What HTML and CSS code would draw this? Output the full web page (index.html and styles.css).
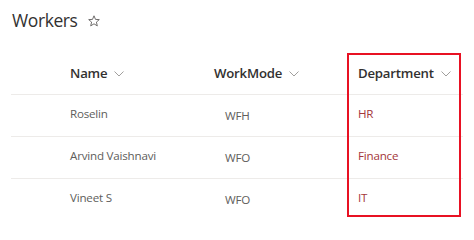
FILE: index.html
```html
<!DOCTYPE html>
<html>
<head>
<meta charset="utf-8">
<link rel="stylesheet" href="styles.css">
</head>
<body>
<div class="page">
  <div class="title-row">
    <h1 class="title">Workers</h1>
    <svg class="star" viewBox="0 0 12 12" width="12" height="12"><polygon points="6,0.8 7.5,4.4 11.3,4.6 8.4,7.1 9.3,10.9 6,8.8 2.7,10.9 3.6,7.1 0.7,4.6 4.5,4.4" fill="none" stroke="#605e5c" stroke-width="0.9" stroke-linejoin="round"/></svg>
  </div>
  <div class="table">
    <div class="row head">
      <div class="cell spacer"></div>
      <div class="cell name">Name<svg class="chev" viewBox="0 0 10 6" width="10" height="6"><polyline points="0.5,0.5 5,5 9.5,0.5" fill="none" stroke="#a19f9d" stroke-width="1"/></svg></div>
      <div class="cell mode">WorkMode<svg class="chev" viewBox="0 0 10 6" width="10" height="6"><polyline points="0.5,0.5 5,5 9.5,0.5" fill="none" stroke="#a19f9d" stroke-width="1"/></svg></div>
      <div class="cell dept">Department<svg class="chev" viewBox="0 0 10 6" width="10" height="6"><polyline points="0.5,0.5 5,5 9.5,0.5" fill="none" stroke="#a19f9d" stroke-width="1"/></svg></div>
    </div>
    <div class="row data">
      <div class="cell spacer"></div>
      <div class="cell name">Roselin</div>
      <div class="cell mode">WFH</div>
      <div class="cell dept">HR</div>
    </div>
    <div class="row data">
      <div class="cell spacer"></div>
      <div class="cell name">Arvind Vaishnavi</div>
      <div class="cell mode">WFO</div>
      <div class="cell dept">Finance</div>
    </div>
    <div class="row data last">
      <div class="cell spacer"></div>
      <div class="cell name">Vineet S</div>
      <div class="cell mode">WFO</div>
      <div class="cell dept">IT</div>
    </div>
    <div class="highlight"></div>
  </div>
</div>
</body>
</html>
```

FILE: styles.css
```css
html, body {
  margin: 0;
  padding: 0;
  background: #ffffff;
}

body {
  font-family: "Open Sans", "Noto Sans", sans-serif;
  color: #323130;
}

.page {
  width: 474px;
  height: 220px;
  overflow: hidden;
  padding-top: 8px;
  box-sizing: border-box;
}

.title-row {
  display: flex;
  align-items: center;
  height: 24px;
  padding-left: 12px;
}

.title {
  margin: 0;
  font-size: 17.5px;
  font-weight: 400;
  line-height: 24px;
  letter-spacing: -0.4px;
  color: #323130;
}

.star {
  margin-left: 10px;
  margin-top: 1px;
}

.table {
  position: relative;
  margin-top: 21px;
  margin-left: 11px;
  width: 452px;
}

.row {
  display: grid;
  grid-template-columns: 59px 144px 144px 105px;
  border-bottom: 1px solid #edebe9;
  height: 41px;
}

.row.last {
  border-bottom: none;
}

.cell {
  display: flex;
  align-items: center;
  white-space: nowrap;
}

.head .cell {
  font-size: 13.2px;
  font-weight: 600;
  letter-spacing: -0.2px;
  color: #323130;
  padding-bottom: 1px;
}

.chev {
  margin-left: 7px;
  margin-top: 1px;
}

.data .cell {
  font-size: 11.6px;
  letter-spacing: -0.2px;
  color: #605e5c;
  padding-bottom: 4px;
}

.data .cell.mode {
  padding-left: 11px;
  padding-bottom: 0;
}

.data .cell.dept {
  color: #a4373a;
}

.highlight {
  position: absolute;
  left: 336px;
  top: 0;
  width: 110px;
  height: 160px;
  border: 2px solid #e81123;
}
```
